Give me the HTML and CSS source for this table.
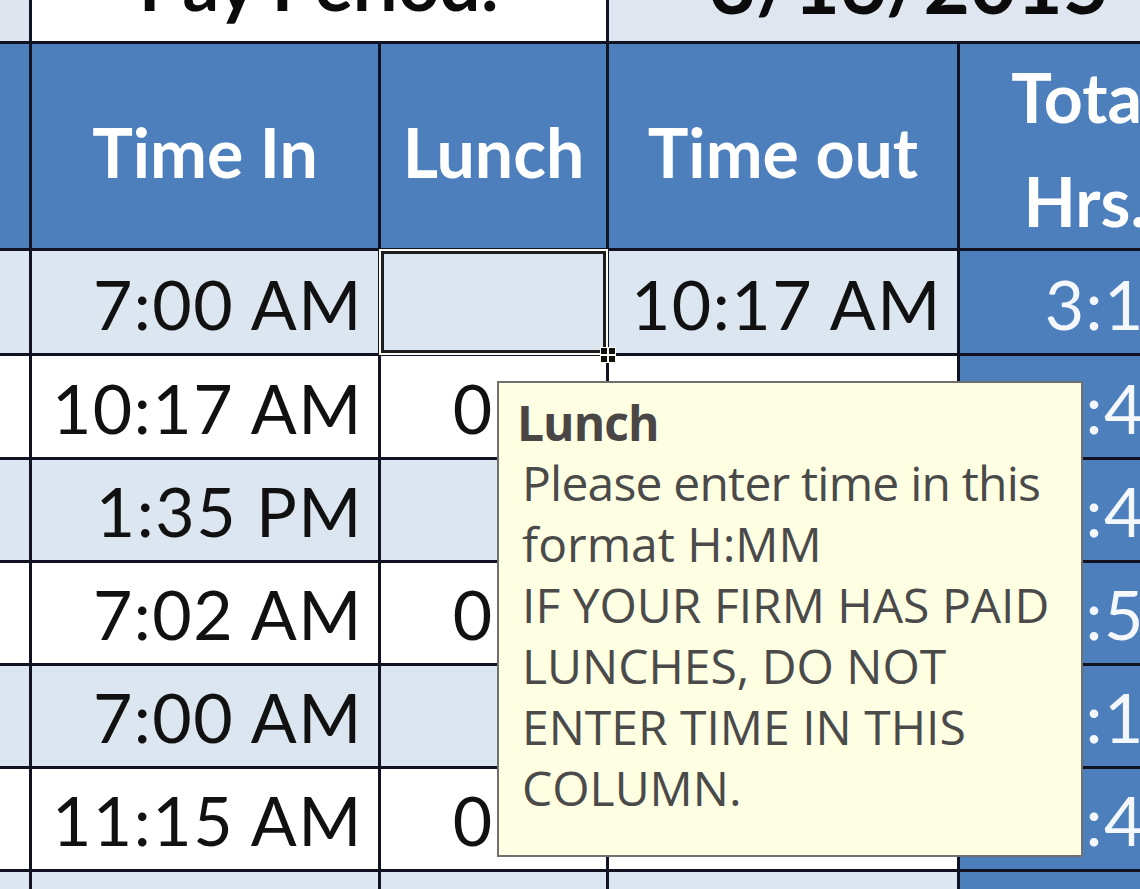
FILE: index.html
```html
<!DOCTYPE html>
<html>
<head>
<meta charset="utf-8">
<link rel="stylesheet" href="styles.css">
</head>
<body>
<div class="viewport">
<div class="sheet">
  <div class="c strip top-strip"></div>
  <div class="c top pay"><span>Pay Period:</span></div>
  <div class="c top date"><span>3/16/2015</span></div>

  <div class="c strip hdr"></div>
  <div class="c hdr"><span>Time In</span></div>
  <div class="c hdr"><span>Lunch</span></div>
  <div class="c hdr"><span>Time out</span></div>
  <div class="c hdr total-hdr"><span>Total</span><span>Hrs.</span></div>

  <div class="c strip alt"></div>
  <div class="c val alt">7:00 AM</div>
  <div class="c val alt sel"><div class="sel-box"></div><div class="handle"></div></div>
  <div class="c val alt">10:17 AM</div>
  <div class="c val tot">3:17</div>

  <div class="c strip"></div>
  <div class="c val">10:17 AM</div>
  <div class="c val lunch">0:30</div>
  <div class="c val">1:35 PM</div>
  <div class="c val tot">2:48</div>

  <div class="c strip alt"></div>
  <div class="c val alt">1:35 PM</div>
  <div class="c val alt"></div>
  <div class="c val alt">5:15 PM</div>
  <div class="c val tot">3:40</div>

  <div class="c strip"></div>
  <div class="c val">7:02 AM</div>
  <div class="c val lunch">0:30</div>
  <div class="c val">6:30 PM</div>
  <div class="c val tot">10:58</div>

  <div class="c strip alt"></div>
  <div class="c val alt">7:00 AM</div>
  <div class="c val alt"></div>
  <div class="c val alt">11:15 AM</div>
  <div class="c val tot">4:15</div>

  <div class="c strip"></div>
  <div class="c val">11:15 AM</div>
  <div class="c val lunch">0:30</div>
  <div class="c val">4:15 PM</div>
  <div class="c val tot">4:40</div>

  <div class="c strip alt"></div>
  <div class="c val alt"></div>
  <div class="c val alt"></div>
  <div class="c val alt"></div>
  <div class="c val tot"></div>
</div>

<div class="tip">
  <div class="tip-title">Lunch</div>
  <div class="tip-body">
    <div>Please enter time in this</div>
    <div>format H:MM</div>
    <div>IF YOUR FIRM HAS PAID</div>
    <div>LUNCHES, DO NOT</div>
    <div>ENTER TIME IN THIS</div>
    <div>COLUMN.</div>
  </div>
</div>
</div>
</body>
</html>
```

FILE: styles.css
```css
html, body {
  margin: 0;
  padding: 0;
  background: #ffffff;
}

body {
  font-family: Lato, "Open Sans", sans-serif;
}

.viewport {
  position: relative;
  width: 1140px;
  height: 889px;
  overflow: hidden;
}

.sheet {
  display: grid;
  grid-template-columns: 29px 346px 225px 348px 250px;
  grid-template-rows: 41px 204px 102px 101px 100px 100px 100px 100px 100px;
  gap: 3px;
  background: #111322;
  width: max-content;
}

.c {
  background: #ffffff;
  position: relative;
  overflow: hidden;
  box-sizing: border-box;
}

.strip.top-strip {
  background: #dfe5ee;
}

.top {
  font-weight: 700;
  color: #0b0b0b;
  text-align: center;
}

.top span {
  display: block;
  line-height: 1;
}

.pay {
  grid-column: 2 / 4;
  background: #ffffff;
  font-size: 72px;
}

.pay span {
  margin-top: -53px;
}

.date {
  grid-column: 4 / 6;
  background: #dfe6f0;
  font-size: 80px;
}

.date span {
  margin-top: -57px;
}

.hdr {
  background: #4c7fbc;
  color: #ffffff;
  font-weight: 700;
  font-size: 68px;
  display: flex;
  align-items: center;
  justify-content: center;
  padding-top: 12px;
  line-height: 1.2;
}

.total-hdr {
  flex-direction: column;
  justify-content: flex-start;
  align-items: center;
  padding-top: 12px;
  gap: 22px;
}

.alt {
  background: #dce6f1;
}

.val {
  font-size: 68px;
  color: #111111;
  line-height: 1.2;
  display: flex;
  align-items: flex-end;
  justify-content: flex-end;
  padding-right: 15px;
  padding-bottom: 8px;
  letter-spacing: 1.5px;
}

.lunch {
  padding-right: 12px;
}

.tot {
  background: #4c7fbc;
  color: #f4f7fb;
  padding-right: 24px;
}

.sel {
  overflow: visible;
  z-index: 2;
}

.sel-box {
  position: absolute;
  inset: 0;
  border: 3px solid #1d1d1d;
  box-shadow: 0 0 0 2px #fdfbf0;
}

.handle {
  position: absolute;
  right: -10px;
  bottom: -10px;
  width: 16px;
  height: 16px;
  background: #111111;
  border: 1px solid #fdfbf0;
  box-sizing: border-box;
}

.handle::before,
.handle::after {
  content: "";
  position: absolute;
  background: #fdfbf0;
}

.handle::before {
  left: 6px;
  top: 0;
  width: 2px;
  height: 14px;
}

.handle::after {
  top: 6px;
  left: 0;
  height: 2px;
  width: 14px;
}

.tip {
  position: absolute;
  left: 497px;
  top: 381px;
  width: 586px;
  height: 476px;
  box-sizing: border-box;
  background: #fefee2;
  border: 2px solid #707070;
  padding: 11px 0 0 18px;
  font-family: "Open Sans", "Noto Sans", sans-serif;
  font-size: 48px;
  line-height: 61px;
  color: #4a4a4a;
  z-index: 5;
}

.tip-title {
  font-weight: 700;
  line-height: 58px;
  color: #4a4646;
  letter-spacing: -1px;
}

.tip-body {
  margin-left: 5px;
}

.tip-body div:first-child {
  letter-spacing: -0.8px;
}
```
